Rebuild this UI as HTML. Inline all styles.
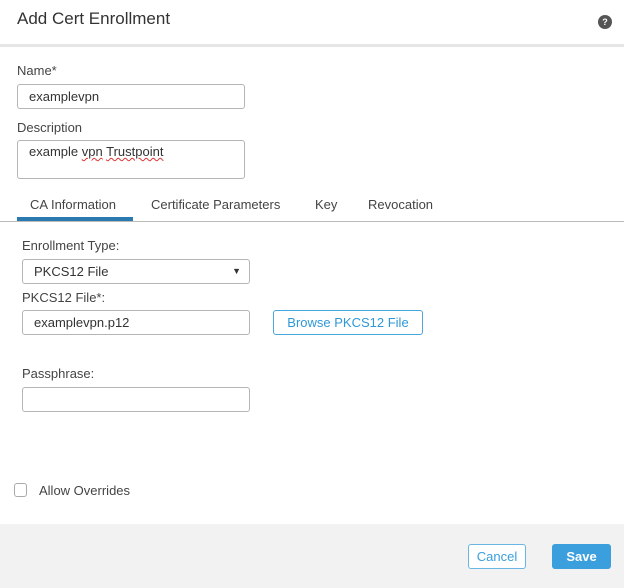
<!DOCTYPE html>
<html><head><style>
body{margin:0;width:624px;height:588px;position:relative;background:#fff;font-family:"Liberation Sans",sans-serif;color:#333;overflow:hidden}
.a{position:absolute}
.lbl{font-size:13px;color:#444}
.in{position:absolute;border:1px solid #b5b5b5;border-radius:3px;box-sizing:border-box;font-size:13px;color:#333;padding-left:11px;background:#fff}
.tab{position:absolute;top:197px;font-size:13px;color:#444}
</style></head><body>
<div class="a" style="left:17px;top:9px;font-size:17px;color:#333">Add Cert Enrollment</div>
<div class="a" style="left:598px;top:15px;width:14px;height:14px;border-radius:50%;background:#555;color:#fff;font-size:9px;font-weight:bold;text-align:center;line-height:14px">?</div>
<div class="a" style="left:0;top:44px;width:624px;height:3px;background:#e6e6e6"></div>
<div class="a lbl" style="left:17px;top:63px">Name*</div>
<div class="in" style="left:17px;top:84px;width:228px;height:25px;line-height:23px">examplevpn</div>
<div class="a lbl" style="left:17px;top:120px">Description</div>
<div class="in" style="left:17px;top:140px;width:228px;height:39px;padding-top:3px">example <span style="text-decoration:underline wavy #d33;text-decoration-thickness:1px">vpn</span> <span style="text-decoration:underline wavy #d33;text-decoration-thickness:1px">Trustpoint</span></div>
<div class="tab" style="left:30px">CA Information</div>
<div class="tab" style="left:151px">Certificate Parameters</div>
<div class="tab" style="left:315px">Key</div>
<div class="tab" style="left:368px">Revocation</div>
<div class="a" style="left:17px;top:217px;width:116px;height:4px;background:#2a7ab0"></div>
<div class="a" style="left:0;top:221px;width:624px;height:1px;background:#bbb"></div>
<div class="a lbl" style="left:22px;top:238px">Enrollment Type:</div>
<div class="in" style="left:22px;top:259px;width:228px;height:25px;line-height:23px">PKCS12 File<span style="position:absolute;right:8px;top:0;font-size:9px">▼</span></div>
<div class="a lbl" style="left:22px;top:290px">PKCS12 File*:</div>
<div class="in" style="left:22px;top:310px;width:228px;height:25px;line-height:23px">examplevpn.p12</div>
<div class="a" style="left:273px;top:310px;width:150px;height:25px;border:1px solid #49a7dd;border-radius:3px;box-sizing:border-box;color:#2f98d6;font-size:13px;text-align:center;line-height:23px">Browse PKCS12 File</div>
<div class="a lbl" style="left:22px;top:366px">Passphrase:</div>
<div class="in" style="left:22px;top:387px;width:228px;height:25px"></div>
<div class="a" style="left:14px;top:483px;width:13px;height:14px;border:1px solid #aaa;border-radius:3px;box-sizing:border-box"></div>
<div class="a lbl" style="left:39px;top:483px">Allow Overrides</div>
<div class="a" style="left:0;top:524px;width:624px;height:64px;background:#f2f2f2"></div>
<div class="a" style="left:468px;top:544px;width:58px;height:25px;border:1px solid #6ab6e3;border-radius:3px;box-sizing:border-box;color:#3a9fdc;font-size:13px;text-align:center;line-height:23px;background:#fff">Cancel</div>
<div class="a" style="left:552px;top:544px;width:59px;height:25px;border-radius:3px;background:#3a9fdc;color:#fff;font-size:13px;font-weight:bold;text-align:center;line-height:25px">Save</div>
</body></html>
